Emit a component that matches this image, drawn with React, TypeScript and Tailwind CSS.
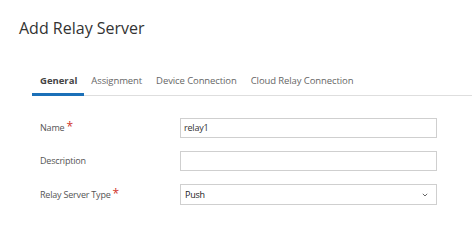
import React from "react";

const tabs = ["General", "Assignment", "Device Connection", "Cloud Relay Connection"];

function Req() {
  return <span className="text-[#d0342c] text-[12px] leading-none relative top-[0px] ml-[2px]">*</span>;
}

export default function App() {
  return (
    <div
      className="w-[474px] h-[248px] bg-white overflow-hidden"
      style={{ fontFamily: '"Open Sans", "Noto Sans", sans-serif' }}
    >
      <h1 className="pl-[19px] pt-[16px] text-[16px] leading-[24px] text-[#333]">
        Add Relay Server
      </h1>

      <div className="mt-[34px] ml-[32px] mr-[2px] flex border-b border-[#dedede]">
        {tabs.map((t, i) => (
          <div
            key={t}
            className={
              i === 0
                ? "pl-[8px] pr-[7px] pb-[5px] text-[9.5px] leading-[14px] tracking-[0px] font-bold text-[#444] border-b-[3px] border-[#1b70b8] -mb-[1px]"
                : "px-[7px] pb-[5px] text-[9.5px] leading-[14px] tracking-[-0.1px] text-[#666] border-b-[3px] border-transparent -mb-[1px]"
            }
          >
            {t}
          </div>
        ))}
      </div>

      <div className="mt-[22px] pl-[40px] flex flex-col gap-[13px] text-[9px] tracking-[-0.2px] text-[#555]">
        <div className="flex items-center h-[20px]">
          <div className="w-[140px]">
            Name
            <Req />
          </div>
          <div className="w-[257px] h-[20px] border border-[#cfcfcf] px-[3px] flex items-center text-[#333]">relay1</div>
        </div>
        <div className="flex items-center h-[20px]">
          <div className="w-[140px]">Description</div>
          <div className="w-[257px] h-[20px] border border-[#cfcfcf]" />
        </div>
        <div className="flex items-center h-[21px]">
          <div className="w-[140px]">
            Relay Server Type
            <Req />
          </div>
          <div className="w-[257px] h-[21px] border border-[#cfcfcf] pl-[4px] pr-[8px] flex items-center justify-between text-[#222]">
            <span>Push</span>
            <svg width="6" height="4" viewBox="0 0 6 4" fill="none">
              <path d="M0.8 0.8 L3 3 L5.2 0.8" stroke="#666" strokeWidth="1" />
            </svg>
          </div>
        </div>
      </div>
    </div>
  );
}
